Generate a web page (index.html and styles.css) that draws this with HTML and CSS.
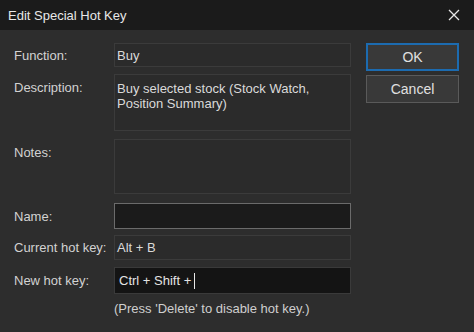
FILE: index.html
```html
<!DOCTYPE html>
<html lang="en">

<head>
    <meta charset="UTF-8">
    <title>Edit Special Hot Key</title>
    <link rel="stylesheet" href="styles.css">
</head>

<body>
    <div class="dialog">
        <header class="titlebar">
            <span class="title">Edit Special Hot Key</span>
            <svg class="close" width="12" height="12" viewBox="0 0 12 12">
                <path d="M1 1 L11 11 M11 1 L1 11" stroke="#e6e6e6" stroke-width="1.3" fill="none" />
            </svg>
        </header>

        <div class="content">
            <form class="fields">
                <div class="row row-function">
                    <label class="lbl">Function:</label>
                    <div class="box readonly">Buy</div>
                </div>

                <div class="row row-desc">
                    <label class="lbl lbl-top">Description:</label>
                    <div class="box readonly multi">Buy selected stock (Stock Watch,<br>Position Summary)</div>
                </div>

                <div class="row row-notes">
                    <label class="lbl lbl-top">Notes:</label>
                    <div class="box readonly multi"></div>
                </div>

                <div class="row row-name">
                    <label class="lbl">Name:</label>
                    <div class="box edit"></div>
                </div>

                <div class="row row-current">
                    <label class="lbl">Current hot key:</label>
                    <div class="box readonly">Alt + B</div>
                </div>

                <div class="row row-new">
                    <label class="lbl">New hot key:</label>
                    <div class="box focus">Ctrl + Shift +<span class="caret"></span></div>
                </div>

                <p class="hint">(Press 'Delete' to disable hot key.)</p>
            </form>

            <div class="buttons">
                <button class="btn default" type="button">OK</button>
                <button class="btn" type="button">Cancel</button>
            </div>
        </div>
    </div>
</body>

</html>
```

FILE: styles.css
```css
body {
    margin: 0;
    font-family: "Liberation Sans", Arial, sans-serif;
    font-size: 13px;
    color: #d6d6d6;
    background-color: #2d2d2d;
}

.dialog {
    width: 474px;
    height: 332px;
    display: flex;
    flex-direction: column;
}

.titlebar {
    height: 30px;
    flex: none;
    display: flex;
    align-items: center;
    justify-content: space-between;
    padding: 0 14px 0 8px;
    background-color: #1b1b1b;
    color: #e8e8e8;
}

.title {
    font-size: 13px;
}

.content {
    display: flex;
    gap: 15px;
    padding: 13px 0 0 14px;
}

.fields {
    margin: 0;
    display: flex;
    flex-direction: column;
}

.row {
    display: flex;
}

.row-function { height: 24px; }
.row-desc { height: 57px; margin-top: 7px; }
.row-notes { height: 55px; margin-top: 8px; }
.row-name { height: 26px; margin-top: 9px; }
.row-current { height: 25px; margin-top: 6px; }
.row-new { height: 27px; margin-top: 7px; }

.lbl {
    width: 100px;
    display: flex;
    align-items: center;
    color: #d2d2d2;
}

.lbl-top {
    align-items: flex-start;
    padding-top: 6px;
}

.box {
    width: 237px;
    box-sizing: border-box;
    display: flex;
    align-items: center;
    padding: 0 2px;
    border: 1px solid #3b3b3b;
    background-color: #2b2b2b;
    color: #dadada;
    white-space: nowrap;
}

.box.multi {
    display: block;
    padding-top: 6px;
    line-height: 15px;
}

.box.edit {
    border-color: #6b6b6b;
    background-color: #1b1b1b;
}

.box.focus {
    padding-left: 4px;
    border-color: #3a3a3a;
    background-color: #141414;
    color: #e4e4e4;
}

.caret {
    width: 1px;
    height: 16px;
    margin-left: 3px;
    background-color: #e8e8e8;
}

.hint {
    margin: 7px 0 0 100px;
    color: #cfcfcf;
}

.buttons {
    display: flex;
    flex-direction: column;
    gap: 4px;
}

.btn {
    box-sizing: border-box;
    width: 93px;
    height: 28px;
    font: inherit;
    font-size: 14px;
    color: #e0e0e0;
    background-color: #393939;
    border: 1px solid #5a5a5a;
}

.btn.default {
    border: 2px solid #1c6bb0;
}
```
